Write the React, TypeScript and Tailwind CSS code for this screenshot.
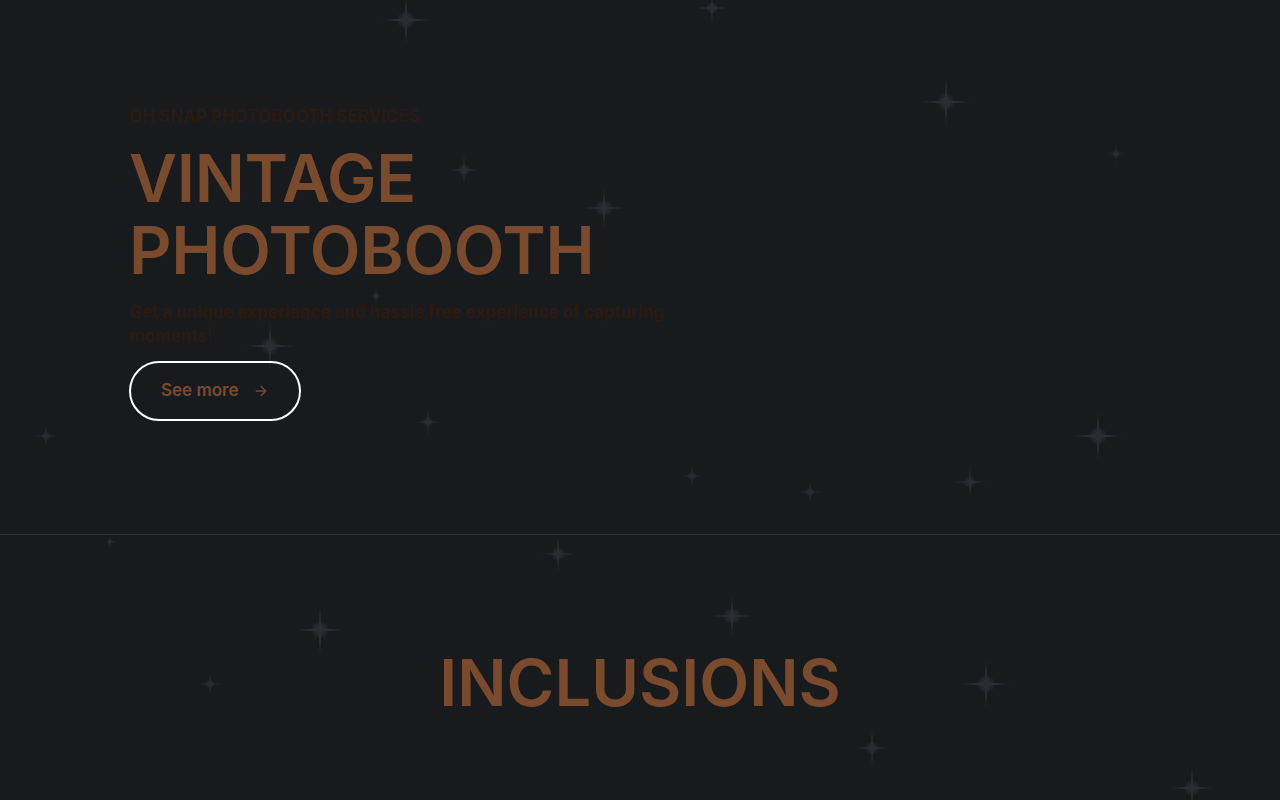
import { ArrowRight } from 'lucide-react';

type Star = { x: number; y: number; s: number };

// sparkle positions taken from the reference; s = arm length in px
const stars: Star[] = [
  { x: 406, y: 20, s: 24 },
  { x: 712, y: 8, s: 16 },
  { x: 946, y: 102, s: 24 },
  { x: 1116, y: 154, s: 10 },
  { x: 464, y: 170, s: 16 },
  { x: 604, y: 208, s: 22 },
  { x: 376, y: 296, s: 10 },
  { x: 270, y: 346, s: 24 },
  { x: 46, y: 436, s: 12 },
  { x: 428, y: 422, s: 14 },
  { x: 1098, y: 436, s: 24 },
  { x: 692, y: 476, s: 12 },
  { x: 970, y: 482, s: 16 },
  { x: 810, y: 492, s: 12 },
  { x: 110, y: 542, s: 8 },
  { x: 558, y: 554, s: 18 },
  { x: 732, y: 616, s: 22 },
  { x: 320, y: 630, s: 24 },
  { x: 210, y: 684, s: 12 },
  { x: 986, y: 684, s: 24 },
  { x: 872, y: 748, s: 18 },
  { x: 1192, y: 788, s: 22 },
];

function Sparkle({ x, y, s }: Star) {
  const d = s * 2;
  const id = `g${x}-${y}`;
  return (
    <svg
      className="absolute pointer-events-none"
      style={{ left: x - s, top: y - s, width: d, height: d }}
      viewBox="-10 -10 20 20"
    >
      <defs>
        <radialGradient id={id}>
          <stop offset="0%" stopColor="#33363a" />
          <stop offset="100%" stopColor="#33363a" stopOpacity="0" />
        </radialGradient>
      </defs>
      <circle cx="0" cy="0" r="4" fill={`url(#${id})`} />
      <path
        d="M0 -10 L0.6 -0.6 L10 0 L0.6 0.6 L0 10 L-0.6 0.6 L-10 0 L-0.6 -0.6 Z"
        fill="#2b2e32"
      />
    </svg>
  );
}

export default function App() {
  return (
    <div
      className="relative min-h-[800px] w-full overflow-hidden bg-[#181b1e]"
      style={{ fontFamily: 'Inter, "Noto Sans", sans-serif' }}
    >
      {stars.map(st => (
        <Sparkle key={`${st.x}-${st.y}`} {...st} />
      ))}

      <section className="relative h-[535px] border-b border-[#2f3236]">
        <div className="px-[129px] pt-[104px]">
          <p className="text-[17px] font-bold leading-[24px] text-[#2b1a0f]">OH SNAP PHOTOBOOTH SERVICES</p>
          <h1 className="mt-[14px] text-[66px] font-semibold leading-[72px] tracking-[-0.3px] text-[#7a4a2c]">
            VINTAGE
            <br />
            PHOTOBOOTH
          </h1>
          <p className="mt-[14px] max-w-[560px] text-[17px] font-bold leading-[24px] text-[#2b1a0f]">
            Get a unique experience and hassle free experience of capturing moments!
          </p>
          <button className="mt-[13px] flex h-[60px] items-center gap-[14px] rounded-full border-2 border-white px-[30px] text-[17px] font-semibold text-[#7a4a2c]">
            See more
            <ArrowRight size={16} strokeWidth={2} />
          </button>
        </div>
      </section>

      <section className="relative pt-[108px]">
        <h2 className="text-center text-[65px] font-semibold leading-[80px] text-[#7a4a2c]">INCLUSIONS</h2>
      </section>
    </div>
  );
}
